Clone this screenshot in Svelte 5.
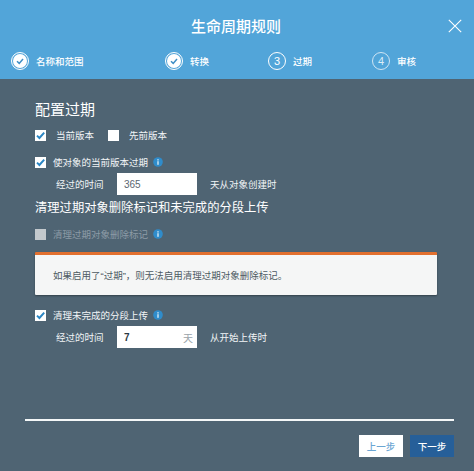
<script>
  const steps = [
    { label: '名称和范围', state: 'done', width: 154 },
    { label: '转换', state: 'done', width: 103 },
    { label: '过期', state: 'active', num: 3, width: 104 },
    { label: '审核', state: 'todo', num: 4, width: 90 }
  ];
</script>

{#snippet check(on = true, off = false)}
  <span class="box" class:off>
    {#if on}
      <svg viewBox="0 0 11 11" width="11" height="11">
        <path d="M2 5.6 4.4 8 9.2 2.6" fill="none" stroke="#2a86c4" stroke-width="1.9" />
      </svg>
    {/if}
  </span>
{/snippet}

{#snippet info()}
  <svg class="info" viewBox="0 0 10 10" width="10" height="10">
    <circle cx="5" cy="5" r="4.8" fill="#2f8ccb" />
    <rect x="4.3" y="4.2" width="1.4" height="3.6" fill="#d5e8f4" />
    <rect x="4.3" y="2.2" width="1.4" height="1.3" fill="#d5e8f4" />
  </svg>
{/snippet}

<div class="page">
  <header>
    <div class="title-row">
      <h1>生命周期规则</h1>
      <button class="close" aria-label="关闭">
        <svg viewBox="0 0 14 14" width="14" height="14">
          <path d="M.8.8 13.2 13.2M13.2.8.8 13.2" stroke="#fff" stroke-width="1.1" fill="none" />
        </svg>
      </button>
    </div>
    <div class="steps">
      {#each steps as step}
        <div class="step {step.state}" style:width="{step.width}px">
          <span class="circle">
            {#if step.state === 'done'}
              <svg viewBox="0 0 14 14" width="14" height="14">
                <circle cx="7" cy="7" r="7" fill="#fff" />
                <path d="M4 7.3 6.2 9.4 10 4.9" fill="none" stroke="#3f8fc6" stroke-width="1.5" />
              </svg>
            {:else}
              {step.num}
            {/if}
          </span>
          <span class="step-label">{step.label}</span>
        </div>
      {/each}
    </div>
  </header>

  <main>
    <h2 class="first">配置过期</h2>

    <div class="row versions">
      <label>{@render check()}<span>当前版本</span></label>
      <label>{@render check(false)}<span>先前版本</span></label>
    </div>

    <div class="row option current">
      {@render check()}<span>使对象的当前版本过期</span>{@render info()}
    </div>
    <div class="row time">
      <span class="time-label">经过的时间</span>
      <div class="input">365</div>
      <span>天从对象创建时</span>
    </div>

    <h2 class="second">清理过期对象删除标记和未完成的分段上传</h2>

    <div class="row option disabled">
      {@render check(false, true)}<span>清理过期对象删除标记</span>{@render info()}
    </div>

    <div class="alert">{'如果启用了“过期”\uFF0C则无法启用清理过期对象删除标记。'}</div>

    <div class="row option multipart">
      {@render check()}<span>清理未完成的分段上传</span>{@render info()}
    </div>
    <div class="row time">
      <span class="time-label">经过的时间</span>
      <div class="input strong"><b>7</b><i>天</i></div>
      <span>从开始上传时</span>
    </div>
  </main>

  <footer>
    <div class="rule"></div>
    <div class="buttons">
      <button class="prev">上一步</button>
      <button class="next">下一步</button>
    </div>
  </footer>
</div>

<style>
  :global(body) {
    margin: 0;
    background: #4f6473;
  }

  .page {
    width: 474px;
    height: 471px;
    display: flex;
    flex-direction: column;
    overflow: hidden;
    background: #4f6473;
    color: #f2f5f7;
    font-family: "Liberation Sans", "Noto Sans CJK SC", sans-serif;
    font-size: 9.5px;
  }

  header {
    height: 79px;
    flex: none;
    background: #52a5d9;
    color: #fff;
  }

  .title-row {
    position: relative;
    height: 51px;
    display: flex;
    align-items: center;
    justify-content: center;
  }

  h1 {
    margin: 0 0 0 -2px;
    font-size: 15px;
    font-weight: 500;
  }

  .close {
    position: absolute;
    right: 12px;
    top: 19px;
    padding: 0;
    border: 0;
    background: none;
    display: flex;
  }

  .steps {
    display: flex;
    padding-left: 11px;
  }

  .step {
    display: flex;
    align-items: center;
    gap: 7px;
    height: 20px;
    font-size: 9.5px;
    font-weight: 500;
  }

  .circle {
    width: 18px;
    height: 18px;
    box-sizing: border-box;
    border-radius: 50%;
    border: 1px solid #fff;
    display: flex;
    align-items: center;
    justify-content: center;
    font-size: 11px;
    font-weight: 400;
  }

  .step.active .circle {
    border-width: 1.5px;
  }

  .step.todo .circle {
    border-color: #cfe5f4;
    color: #dcedf8;
  }

  main {
    flex: 1;
    padding: 0 37px 0 35px;
  }

  h2 {
    margin: 0;
    font-weight: 400;
    color: #fff;
  }

  h2.first {
    font-size: 15px;
    line-height: 22px;
    margin-top: 20px;
  }

  h2.second {
    font-size: 12.3px;
    line-height: 22px;
    margin-top: 2px;
  }

  .row {
    display: flex;
    align-items: center;
  }

  .versions {
    height: 16px;
    margin-top: 6px;
  }

  .versions label {
    display: flex;
    align-items: center;
    gap: 10px;
    margin-right: 14px;
  }

  .option {
    height: 16px;
    gap: 7px;
  }

  .current {
    margin-top: 11px;
  }

  .disabled {
    margin-top: 7px;
    color: #8c9ba6;
  }

  .multipart {
    margin-top: 12px;
  }

  .box {
    width: 11px;
    height: 11px;
    background: #fff;
    flex: none;
    display: flex;
  }

  .box.off {
    background: #c3c9cd;
  }

  .info {
    margin-left: -2px;
    flex: none;
  }

  .time {
    height: 22px;
    margin-top: 3px;
    padding-left: 21px;
  }

  .time-label {
    width: 61px;
  }

  .input {
    width: 80px;
    height: 22px;
    box-sizing: border-box;
    margin-right: 13px;
    padding: 0 4px 0 7px;
    background: #fff;
    color: #5b6770;
    font-size: 10px;
    display: flex;
    align-items: center;
    justify-content: space-between;
  }

  .input b {
    color: #2c3a44;
  }

  .input i {
    font-style: normal;
    color: #9aa3a9;
  }

  .alert {
    height: 40px;
    margin-top: 10px;
    padding-left: 18px;
    border-top: 3px solid #e2702f;
    border-radius: 1px;
    background: #f5f6f6;
    color: #4d5a63;
    box-shadow: 0 1px 2px rgba(0, 0, 0, 0.35);
    display: flex;
    align-items: center;
  }

  footer {
    flex: none;
    padding: 0 20px 14px 25px;
  }

  .rule {
    height: 2px;
    background: #f4f7f8;
  }

  .buttons {
    display: flex;
    justify-content: flex-end;
    gap: 7px;
    margin-top: 14px;
  }

  .buttons button {
    width: 44px;
    height: 22px;
    padding: 0;
    border: 0;
    font: inherit;
    font-weight: 500;
  }

  .prev {
    background: #fff;
    color: #6ba6d3;
  }

  .next {
    background: #265f99;
    color: #fff;
  }
</style>
